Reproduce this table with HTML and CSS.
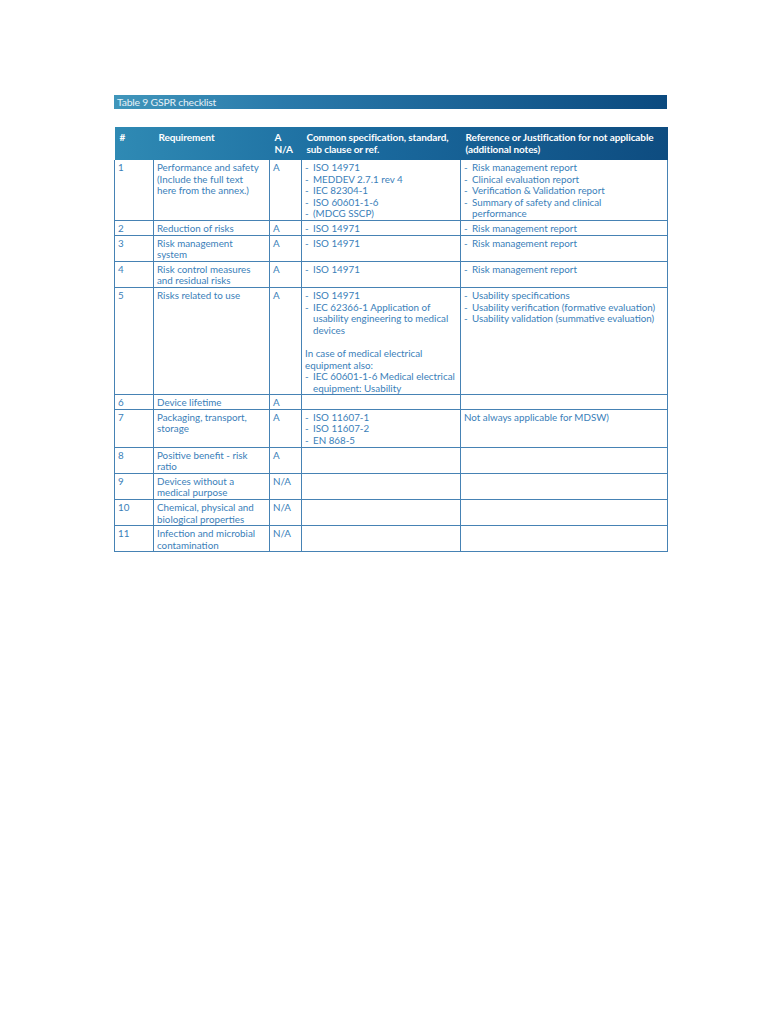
FILE: index.html
```html
<!DOCTYPE html>
<html lang="en">
<head>
<meta charset="utf-8">
<title>Table 9 GSPR checklist</title>
<link rel="stylesheet" href="styles.css">
</head>
<body>
<div class="page">
  <div class="caption">Table 9 GSPR checklist</div>
  <table class="gspr">
    <colgroup>
      <col class="c-num"><col class="c-req"><col class="c-a"><col class="c-spec"><col class="c-ref">
    </colgroup>
    <thead>
      <tr>
        <th>#</th>
        <th>Requirement</th>
        <th>A<br>N/A</th>
        <th>Common specification, standard, sub clause or ref.</th>
        <th>Reference or Justification for not applicable (additional notes)</th>
      </tr>
    </thead>
    <tbody>
      <tr>
        <td>1</td>
        <td class="req">Performance and safety (Include the full text here from the annex.)</td>
        <td>A</td>
        <td class="spec"><ul class="dash"><li>ISO 14971</li><li>MEDDEV 2.7.1 rev 4</li><li>IEC 82304-1</li><li>ISO 60601-1-6</li><li>(MDCG SSCP)</li></ul></td>
        <td class="ref"><ul class="dash"><li>Risk management report</li><li>Clinical evaluation report</li><li>Verification &amp; Validation report</li><li>Summary of safety and clinical performance</li></ul></td>
      </tr>
      <tr>
        <td>2</td>
        <td class="req">Reduction of risks</td>
        <td>A</td>
        <td class="spec"><ul class="dash"><li>ISO 14971</li></ul></td>
        <td class="ref"><ul class="dash"><li>Risk management report</li></ul></td>
      </tr>
      <tr>
        <td>3</td>
        <td class="req">Risk management system</td>
        <td>A</td>
        <td class="spec"><ul class="dash"><li>ISO 14971</li></ul></td>
        <td class="ref"><ul class="dash"><li>Risk management report</li></ul></td>
      </tr>
      <tr>
        <td>4</td>
        <td class="req">Risk control measures and residual risks</td>
        <td>A</td>
        <td class="spec"><ul class="dash"><li>ISO 14971</li></ul></td>
        <td class="ref"><ul class="dash"><li>Risk management report</li></ul></td>
      </tr>
      <tr>
        <td>5</td>
        <td class="req">Risks related to use</td>
        <td>A</td>
        <td class="spec">
          <ul class="dash"><li>ISO 14971</li><li>IEC 62366-1 Application of usability engineering to medical devices</li></ul>
          <p class="gap">In case of medical electrical equipment also:</p>
          <ul class="dash"><li>IEC 60601-1-6 Medical electrical equipment: Usability</li></ul>
        </td>
        <td class="ref"><ul class="dash"><li>Usability specifications</li><li>Usability verification (formative evaluation)</li><li>Usability validation (summative evaluation)</li></ul></td>
      </tr>
      <tr>
        <td>6</td>
        <td class="req">Device lifetime</td>
        <td>A</td>
        <td class="spec"></td>
        <td class="ref"></td>
      </tr>
      <tr>
        <td>7</td>
        <td class="req">Packaging, transport, storage</td>
        <td>A</td>
        <td class="spec"><ul class="dash"><li>ISO 11607-1</li><li>ISO 11607-2</li><li>EN 868-5</li></ul></td>
        <td class="ref">Not always applicable for MDSW)</td>
      </tr>
      <tr>
        <td>8</td>
        <td class="req">Positive benefit - risk ratio</td>
        <td>A</td>
        <td class="spec"></td>
        <td class="ref"></td>
      </tr>
      <tr>
        <td>9</td>
        <td class="req">Devices without a medical purpose</td>
        <td>N/A</td>
        <td class="spec"></td>
        <td class="ref"></td>
      </tr>
      <tr>
        <td>10</td>
        <td class="req">Chemical, physical and biological properties</td>
        <td>N/A</td>
        <td class="spec"></td>
        <td class="ref"></td>
      </tr>
      <tr>
        <td>11</td>
        <td class="req">Infection and microbial contamination</td>
        <td>N/A</td>
        <td class="spec"></td>
        <td class="ref"></td>
      </tr>
    </tbody>
  </table>
</div>
</body>
</html>
```

FILE: styles.css
```css
html, body {
  margin: 0;
  padding: 0;
  background: #ffffff;
}

.page {
  width: 553px;
  margin-left: 114px;
  padding-top: 95px;
  font-family: Lato, "Open Sans", sans-serif;
}

.caption {
  height: 14px;
  line-height: 14px;
  padding-left: 3px;
  font-size: 10.4px;
  color: #e6f1f7;
  background: linear-gradient(90deg, #4096bb 0%, #2a7aab 30%, #0b4a7f 100%);
  letter-spacing: -0.2px;
}

.gspr {
  margin-top: 18px;
  width: 553px;
  border-collapse: collapse;
  table-layout: fixed;
  font-size: 9.8px;
  line-height: 11.6px;
  color: #3a80b9;
  letter-spacing: 0;
}

.c-num { width: 39px; }
.c-req { width: 116px; }
.c-a { width: 32px; }
.c-spec { width: 159px; }
.c-ref { width: 207px; }

.gspr thead tr {
  background: linear-gradient(90deg, #2f8ab4 0%, #1a6a9e 45%, #0e4c80 100%);
}

.gspr th {
  height: 33px;
  box-sizing: border-box;
  padding: 5px 2px 3px 5px;
  text-align: left;
  vertical-align: top;
  font-size: 10px;
  font-weight: 700;
  color: #ffffff;
  border: none;
  letter-spacing: -0.1px;
}

.gspr td {
  border: 1.5px solid #4682b4;
  padding: 2px 3px 0 3px;
  vertical-align: top;
}

.gspr td.req {
  padding-right: 7px;
}

.gspr td.spec {
  padding-right: 1px;
}

.gspr td.ref {
  padding-right: 11px;
}

.gspr tbody tr:first-child td {
  border-top: none;
}

.dash {
  list-style: none;
  margin: 0;
  padding: 0;
}

.dash li {
  position: relative;
  padding-left: 8px;
}

.dash li::before {
  content: "-";
  position: absolute;
  left: 0;
  top: 0;
}

.gap {
  margin: 11.6px 0 0 0;
}
```
